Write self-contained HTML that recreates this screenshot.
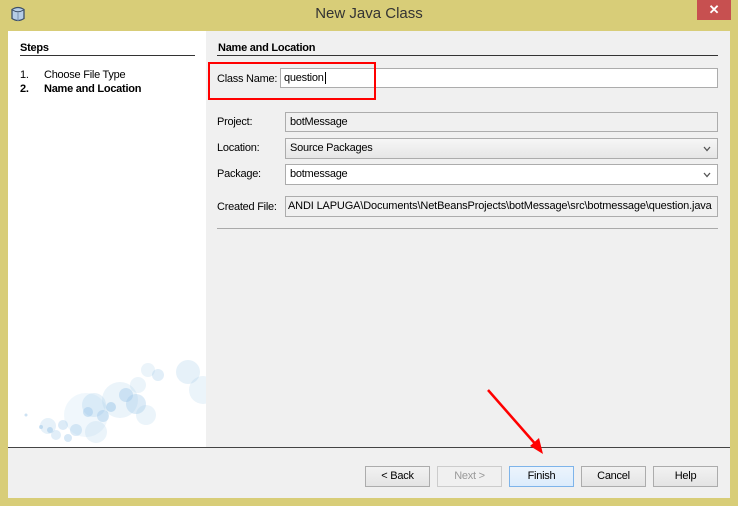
<!DOCTYPE html>
<html><head><meta charset="utf-8"><style>
*{box-sizing:border-box;margin:0;padding:0}
body{width:738px;height:506px;background:#d8cd78;font-family:"Liberation Sans",sans-serif;font-size:11px;letter-spacing:-0.25px;color:#000;position:relative;overflow:hidden}
.abs{position:absolute}
.title{left:0;top:0;width:738px;height:30px;text-align:center;line-height:28px;font-size:15px;color:#333;letter-spacing:0}
.close{left:697px;top:0;width:34px;height:20px;background:#c75050;color:#fff;text-align:center;line-height:19px;font-size:13px;font-weight:bold}
.client{left:8px;top:31px;width:722px;height:467px;background:#f0f0f0}
.left{left:8px;top:31px;width:198px;height:416px;background:#fff}
.field{background:#fff;border:1px solid #acacac;height:21px;line-height:19px;padding-left:4px;font-size:11px}
.ro{background:#f0f0f0}
.btn{top:466px;height:21px;border:1px solid #acacac;background:linear-gradient(#f2f2f2,#e4e4e4);text-align:center;line-height:19px;font-size:11px}
.chev{position:absolute;right:6px;top:7px}
</style></head><body>
<div class="abs title">New Java Class</div>
<div class="abs close">✕</div>
<svg class="abs" style="left:10px;top:5px" width="16" height="18" viewBox="0 0 16 18"><path d="M2 4.5 Q8 0.5 14 4.5 L14 13.5 Q8 17.5 2 13.5Z" fill="#b6cde6" stroke="#3d5068" stroke-width="1.3"/><path d="M2.5 5 Q8 8.5 13.5 5" fill="none" stroke="#3d5068"/><path d="M8 7.5 L8 16" stroke="#7a92b0"/></svg>
<div class="abs client"></div>
<div class="abs left"></div>
<svg class="abs" style="left:8px;top:360px" width="198" height="87">
<g fill="#9cc6e8">
<circle cx="180" cy="12" r="12" opacity=".25"/><circle cx="150" cy="15" r="6" opacity=".3"/><circle cx="140" cy="10" r="7" opacity=".2"/><circle cx="112" cy="40" r="18" opacity=".2"/><circle cx="118" cy="35" r="7" opacity=".4"/><circle cx="128" cy="44" r="10" opacity=".35"/><circle cx="86" cy="45" r="12" opacity=".25"/><circle cx="95" cy="56" r="6" opacity=".4"/><circle cx="78" cy="55" r="22" opacity=".15"/><circle cx="80" cy="52" r="5" opacity=".45"/><circle cx="103" cy="47" r="5" opacity=".5"/><circle cx="138" cy="55" r="10" opacity=".2"/><circle cx="88" cy="72" r="11" opacity=".2"/><circle cx="68" cy="70" r="6" opacity=".35"/><circle cx="55" cy="65" r="5" opacity=".35"/><circle cx="48" cy="75" r="5" opacity=".3"/><circle cx="60" cy="78" r="4" opacity=".4"/><circle cx="42" cy="70" r="3" opacity=".5"/><circle cx="33" cy="67" r="2" opacity=".5"/><circle cx="18" cy="55" r="1.5" opacity=".5"/><circle cx="40" cy="66" r="8" opacity=".25"/><circle cx="130" cy="25" r="8" opacity=".2"/><circle cx="195" cy="30" r="14" opacity=".2"/>
</g></svg>
<div class="abs" style="left:8px;top:447px;width:722px;height:1px;background:#444"></div>
<div class="abs" style="left:20px;top:42px;font-weight:bold">Steps</div>
<div class="abs" style="left:20px;top:55px;width:175px;height:1px;background:#333"></div>
<div class="abs" style="left:20px;top:69px">1.</div><div class="abs" style="left:44px;top:69px">Choose File Type</div>
<div class="abs" style="left:20px;top:83px;font-weight:bold">2.</div><div class="abs" style="left:44px;top:83px;font-weight:bold">Name and Location</div>
<div class="abs" style="left:218px;top:42px;font-weight:bold">Name and Location</div>
<div class="abs" style="left:217px;top:55px;width:501px;height:1px;background:#333"></div>
<div class="abs" style="left:217px;top:73px">Class Name:</div>
<div class="abs field" style="left:280px;top:68px;width:438px;height:20px;line-height:18px;padding-left:3px">question<span style="border-left:1px solid #000;margin-left:1px"></span></div>
<div class="abs" style="left:208px;top:62px;width:168px;height:38px;border:2px solid #f00"></div>
<div class="abs" style="left:217px;top:116px">Project:</div>
<div class="abs field ro" style="left:285px;top:112px;width:433px;height:20px;line-height:18px">botMessage</div>
<div class="abs" style="left:217px;top:142px">Location:</div>
<div class="abs field" style="left:285px;top:138px;width:433px;background:linear-gradient(#f6f6f6,#e6e6e6)">Source Packages<svg class="chev" width="8" height="6"><path d="M1 1 L4 4.5 L7 1" fill="none" stroke="#555" stroke-width="1.3"/></svg></div>
<div class="abs" style="left:217px;top:168px">Package:</div>
<div class="abs field" style="left:285px;top:164px;width:433px">botmessage<svg class="chev" width="8" height="6"><path d="M1 1 L4 4.5 L7 1" fill="none" stroke="#555" stroke-width="1.3"/></svg></div>
<div class="abs" style="left:217px;top:201px">Created File:</div>
<div class="abs field ro" style="left:285px;top:196px;width:433px;white-space:nowrap;overflow:hidden;padding-left:2px;font-size:11px;letter-spacing:-0.15px">ANDI LAPUGA\Documents\NetBeansProjects\botMessage\src\botmessage\question.java</div>
<div class="abs" style="left:217px;top:228px;width:501px;height:1px;background:#aaa"></div>
<div class="abs btn" style="left:365px;width:65px">&lt; Back</div>
<div class="abs btn" style="left:437px;width:65px;color:#999;border-color:#ccc;background:#f0f0f0">Next &gt;</div>
<div class="abs btn" style="left:509px;width:65px;border-color:#7eb4ea;background:linear-gradient(#ecf4fc,#dcecfc)">Finish</div>
<div class="abs btn" style="left:581px;width:65px">Cancel</div>
<div class="abs btn" style="left:653px;width:65px">Help</div>
<svg class="abs" style="left:480px;top:385px" width="70" height="75"><line x1="8" y1="5" x2="58" y2="62" stroke="#f00" stroke-width="2.5"/><path d="M63 69 L50 61 L59 53Z" fill="#f00"/></svg>
</body></html>
